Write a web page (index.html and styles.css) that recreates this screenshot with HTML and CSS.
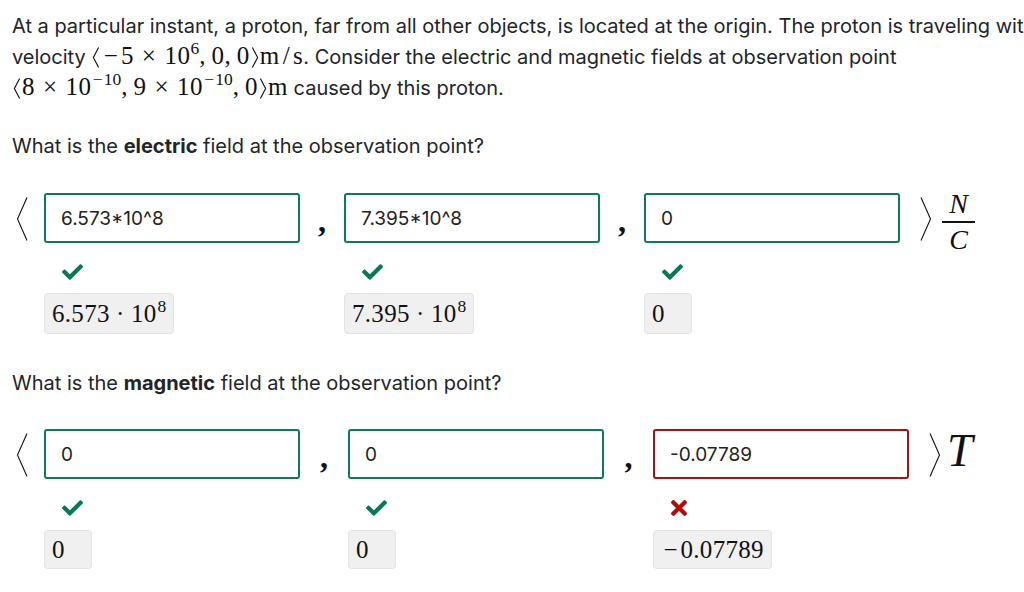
FILE: index.html
```html
<!DOCTYPE html>
<html>
<head>
<meta charset="utf-8">
<link rel="stylesheet" href="styles.css">
</head>
<body>
<p class="intro">At a particular instant, a proton, far from all other objects, is located at the origin. The proton is traveling with<br>velocity <span class="m"><svg class="ang" viewBox="0 0 7 20"><path d="M6 0.5 L1 10 L6 19.5"/></svg><span class="mo">−</span>5<span class="mo op">×</span>10<sup>6</sup><span class="pc">,</span>0<span class="pc">,</span>0<svg class="ang" viewBox="0 0 7 20"><path d="M1 0.5 L6 10 L1 19.5"/></svg>m<span class="sl">/</span>s</span>. Consider the electric and magnetic fields at observation point<br><span class="m"><svg class="ang" viewBox="0 0 7 20"><path d="M6 0.5 L1 10 L6 19.5"/></svg>8<span class="mo op">×</span>10<sup><span class="smo">−</span>10</sup><span class="pc">,</span>9<span class="mo op">×</span>10<sup><span class="smo">−</span>10</sup><span class="pc">,</span>0<svg class="ang" viewBox="0 0 7 20"><path d="M1 0.5 L6 10 L1 19.5"/></svg>m</span> caused by this proton.</p>

<p class="q q1">What is the <b>electric</b> field at the observation point?</p>

<div class="vec vec1">
  <div class="br"><svg class="big-ang left" viewBox="0 0 12 44"><path d="M11 0.5 L1.5 22 L11 43.5"/></svg></div>
  <div class="cell">
    <div class="inp ok">6.573*10^8</div>
    <div class="mark"><svg class="chk" viewBox="0 60 512 390"><path d="M173.898 439.404l-166.4-166.4c-9.997-9.997-9.997-26.206 0-36.204l36.203-36.204c9.997-9.998 26.207-9.998 36.204 0L192 312.69 432.095 72.596c9.997-9.997 26.207-9.997 36.204 0l36.203 36.204c9.997 9.997 9.997 26.206 0 36.204l-294.4 294.401c-9.998 9.997-26.207 9.997-36.204-.001z"/></svg></div>
    <div class="ans"><span class="v">6.573<span class="dot">·</span>10<sup>8</sup></span></div>
  </div>
  <div class="comma">,</div>
  <div class="cell">
    <div class="inp ok">7.395*10^8</div>
    <div class="mark"><svg class="chk" viewBox="0 60 512 390"><path d="M173.898 439.404l-166.4-166.4c-9.997-9.997-9.997-26.206 0-36.204l36.203-36.204c9.997-9.998 26.207-9.998 36.204 0L192 312.69 432.095 72.596c9.997-9.997 26.207-9.997 36.204 0l36.203 36.204c9.997 9.997 9.997 26.206 0 36.204l-294.4 294.401c-9.998 9.997-26.207 9.997-36.204-.001z"/></svg></div>
    <div class="ans"><span class="v">7.395<span class="dot">·</span>10<sup>8</sup></span></div>
  </div>
  <div class="comma">,</div>
  <div class="cell">
    <div class="inp ok">0</div>
    <div class="mark"><svg class="chk" viewBox="0 60 512 390"><path d="M173.898 439.404l-166.4-166.4c-9.997-9.997-9.997-26.206 0-36.204l36.203-36.204c9.997-9.998 26.207-9.998 36.204 0L192 312.69 432.095 72.596c9.997-9.997 26.207-9.997 36.204 0l36.203 36.204c9.997 9.997 9.997 26.206 0 36.204l-294.4 294.401c-9.998 9.997-26.207 9.997-36.204-.001z"/></svg></div>
    <div class="ans"><span class="v">0</span></div>
  </div>
  <div class="br right"><svg class="big-ang" viewBox="0 0 12 44"><path d="M1 0.5 L10.5 22 L1 43.5"/></svg></div>
  <div class="frac"><span class="num">N</span><span class="bar"></span><span class="den">C</span></div>
</div>

<p class="q q2">What is the <b>magnetic</b> field at the observation point?</p>

<div class="vec vec2">
  <div class="br"><svg class="big-ang left" viewBox="0 0 12 44"><path d="M11 0.5 L1.5 22 L11 43.5"/></svg></div>
  <div class="cell">
    <div class="inp ok">0</div>
    <div class="mark"><svg class="chk" viewBox="0 60 512 390"><path d="M173.898 439.404l-166.4-166.4c-9.997-9.997-9.997-26.206 0-36.204l36.203-36.204c9.997-9.998 26.207-9.998 36.204 0L192 312.69 432.095 72.596c9.997-9.997 26.207-9.997 36.204 0l36.203 36.204c9.997 9.997 9.997 26.206 0 36.204l-294.4 294.401c-9.998 9.997-26.207 9.997-36.204-.001z"/></svg></div>
    <div class="ans"><span class="v">0</span></div>
  </div>
  <div class="comma wide">,</div>
  <div class="cell">
    <div class="inp ok">0</div>
    <div class="mark"><svg class="chk" viewBox="0 60 512 390"><path d="M173.898 439.404l-166.4-166.4c-9.997-9.997-9.997-26.206 0-36.204l36.203-36.204c9.997-9.998 26.207-9.998 36.204 0L192 312.69 432.095 72.596c9.997-9.997 26.207-9.997 36.204 0l36.203 36.204c9.997 9.997 9.997 26.206 0 36.204l-294.4 294.401c-9.998 9.997-26.207 9.997-36.204-.001z"/></svg></div>
    <div class="ans"><span class="v">0</span></div>
  </div>
  <div class="comma wider">,</div>
  <div class="cell">
    <div class="inp bad">-0.07789</div>
    <div class="mark"><svg class="xm" viewBox="0 80 352 352"><path d="M242.72 256l100.07-100.07c12.28-12.28 12.28-32.19 0-44.48l-22.24-22.240c-12.28-12.28-32.19-12.28-44.48 0L176 189.28 75.930 89.21c-12.28-12.28-32.19-12.28-44.48 0L9.21 111.45c-12.280 12.28-12.28 32.19 0 44.48L109.28 256 9.21 356.07c-12.28 12.28-12.28 32.19 0 44.48l22.24 22.24c12.28 12.28 32.2 12.28 44.48 0L176 322.72l100.07 100.07c12.28 12.28 32.2 12.28 44.48 0l22.24-22.24c12.28-12.28 12.28-32.19 0-44.48L242.72 256z"/></svg></div>
    <div class="ans"><span class="v"><span class="mo">−</span>0.07789</span></div>
  </div>
  <div class="br right"><svg class="big-ang" viewBox="0 0 12 44"><path d="M1 0.5 L10.5 22 L1 43.5"/></svg></div>
  <div class="unit-t">T</div>
</div>
</body>
</html>
```

FILE: styles.css
```css
html, body {
  margin: 0;
  background: #fff;
}
body {
  padding: 11px 0 0 12px;
  width: 1024px;
  height: 592px;
  box-sizing: border-box;
  overflow: hidden;
  font-family: "Inter", "Noto Sans", sans-serif;
  font-size: 20px;
  color: #212529;
}
p { margin: 0; }
.intro {
  line-height: 30px;
  white-space: nowrap;
}
.m {
  font-family: "Liberation Serif", serif;
  font-size: 25px;
  letter-spacing: 0.5px;
  color: #111;
}
.m sup, .ans sup {
  font-size: 0.7em;
  line-height: 0;
  vertical-align: 0.55em;
  letter-spacing: 0;
}
.mo {
  display: inline-block;
  width: 0.78em;
  text-align: center;
}
.op { margin: 0 0.22em; }
.smo {
  display: inline-block;
  width: 0.7em;
  text-align: center;
}
.pc { margin-right: 0.22em; }
.sl { margin: 0 0.12em; }
.ang {
  width: 8px;
  height: 21px;
  vertical-align: -4px;
  margin: 0 1px;
}
.ang path, .big-ang path {
  fill: none;
  stroke: #111;
  stroke-width: 1.1;
}
.q { line-height: 30px; }
.q1 { margin-top: 28px; }
.q2 { margin-top: 34px; }

.vec {
  display: flex;
  align-items: flex-start;
}
.vec1 { margin-top: 32px; }
.vec2 { margin-top: 31px; }

.br {
  width: 32px;
  padding-top: 4px;
}
.br.right {
  width: 12px;
  margin-left: 20px;
}
.big-ang {
  display: block;
  width: 12px;
  height: 44px;
}
.big-ang.left { margin-left: 4px; }

.cell {
  width: 256px;
  display: flex;
  flex-direction: column;
  align-items: flex-start;
}
.inp {
  width: 256px;
  height: 50px;
  box-sizing: border-box;
  border: 2px solid #0a7d55;
  border-radius: 3px;
  padding-left: 15px;
  display: flex;
  align-items: center;
  font-size: 19px;
  color: #222;
}
.inp.bad { border-color: #b50a0a; }
.mark {
  height: 50px;
  box-sizing: border-box;
  padding: 21px 0 0 18px;
}
.vec2 .mark { height: 51px; }
.chk {
  display: block;
  width: 21px;
  height: 16px;
  fill: #087a50;
}
.xm {
  display: block;
  width: 16px;
  height: 16px;
  fill: #b30d0d;
}
.ans {
  min-width: 48px;
  box-sizing: border-box;
  background: #f0f0f0;
  border: 1px solid #e3e3e3;
  border-radius: 4px;
  padding: 0 7px 0 7px;
  display: flex;
  align-items: center;
  font-family: "Liberation Serif", serif;
  font-size: 25px;
  letter-spacing: 0.3px;
  color: #111;
}
.v { line-height: 28px; }
.vec1 .ans { height: 41px; }
.vec2 .ans { height: 39px; }
.ans sup { margin-left: 1px; }
.dot { margin: 0 0.25em; }

.comma {
  width: 44px;
  text-align: center;
  font-family: "Liberation Serif", serif;
  font-weight: bold;
  font-size: 32px;
  line-height: 32px;
  padding-top: 12px;
  color: #111;
}
.comma.wide { width: 48px; }
.comma.wider { width: 49px; }

.frac {
  display: flex;
  flex-direction: column;
  align-items: center;
  margin-left: 10px;
  margin-top: -3px;
  font-family: "Liberation Serif", serif;
  font-style: italic;
  font-size: 28px;
  color: #111;
}
.num { line-height: 27px; padding-bottom: 4px; }
.bar { width: 33px; height: 1.5px; background: #111; }
.den { line-height: 27px; padding-top: 3px; }

.unit-t {
  margin-left: 6px;
  margin-top: -1px;
  font-family: "Liberation Serif", serif;
  font-style: italic;
  font-size: 46px;
  line-height: 46px;
  color: #111;
}
```
